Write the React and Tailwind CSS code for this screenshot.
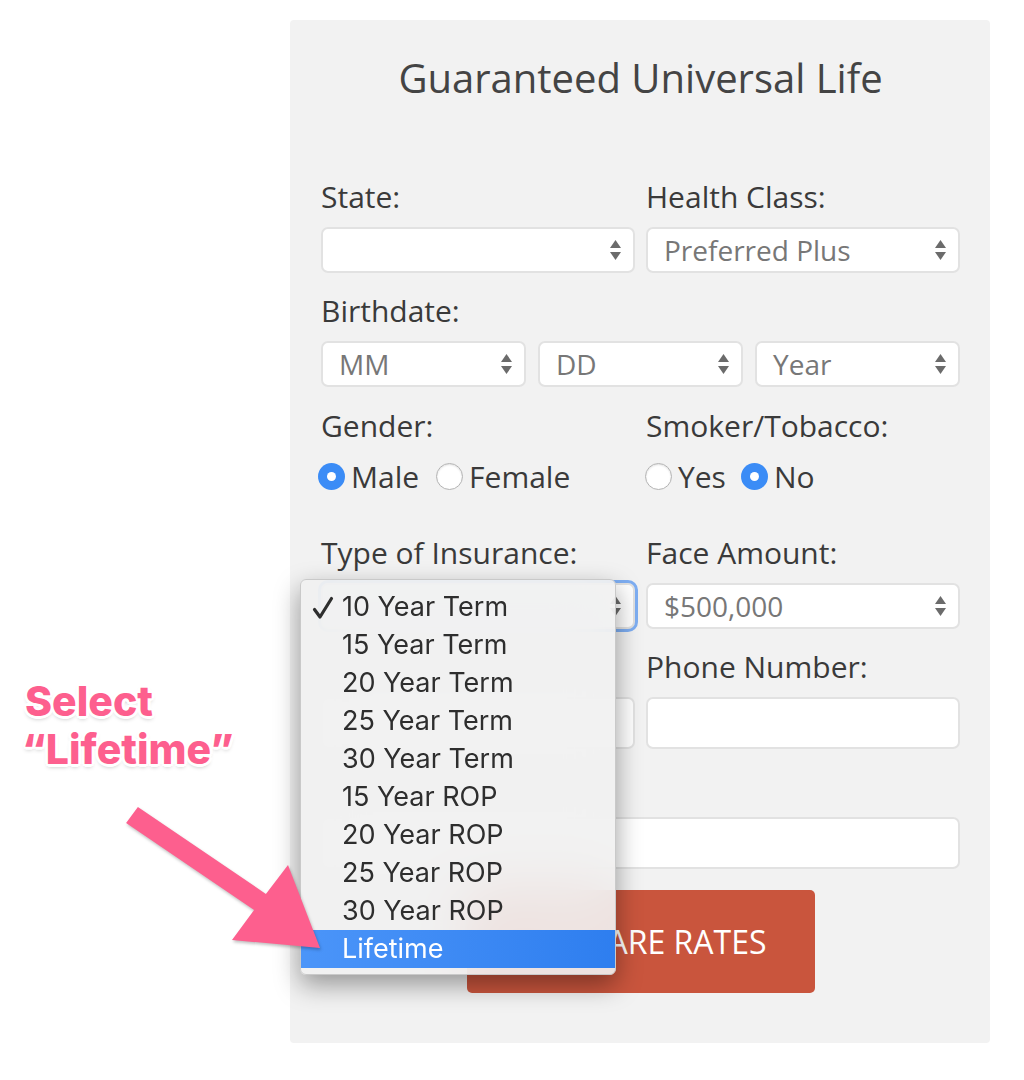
import React from 'react';

const termOptions = [
  '10 Year Term',
  '15 Year Term',
  '20 Year Term',
  '25 Year Term',
  '30 Year Term',
  '15 Year ROP',
  '20 Year ROP',
  '25 Year ROP',
  '30 Year ROP',
  'Lifetime',
];

function Arrows() {
  return (
    <svg width="11" height="22" viewBox="0 0 11 22" className="absolute right-[12px] top-1/2 -translate-y-1/2">
      <polygon points="0,9 5.5,1 11,9" fill="#6b6b6b" />
      <polygon points="0,13 11,13 5.5,21" fill="#6b6b6b" />
    </svg>
  );
}

function SelectBox({ value, focused, children }) {
  return (
    <div
      className={`relative h-[46px] rounded-[7px] border-2 border-[#e2e2e2] bg-white flex items-center pl-[16px] text-[28px] text-[#777] ${
        focused ? 'outline-[3px] outline-solid outline-[#7eaef2] outline-offset-0' : ''
      }`}
    >
      <span>{value}</span>
      <Arrows />
      {children}
    </div>
  );
}

function TextBox() {
  return <div className="h-[52px] rounded-[7px] border-2 border-[#e2e2e2] bg-white" />;
}

function Radio({ checked, label }) {
  return (
    <div className="flex items-center gap-[6px]">
      {checked ? (
        <span className="w-[27px] h-[27px] rounded-full bg-[#3b8cf6] flex items-center justify-center">
          <span className="w-[9px] h-[9px] rounded-full bg-white" />
        </span>
      ) : (
        <span className="w-[27px] h-[27px] rounded-full bg-white border border-[#b3b3b3] shadow-[inset_0_1px_2px_rgba(0,0,0,0.12)]" />
      )}
      <span>{label}</span>
    </div>
  );
}

function Label({ children }) {
  return <div className="h-[36px] text-[30px] leading-[36px] text-[#3a3a3a]">{children}</div>;
}

function Dropdown() {
  return (
    <div className="absolute left-[-23px] top-[-6px] w-[316px] h-[396px] z-20 rounded-[6px] border border-[#c9c9c9] bg-[#f1f1f1]/90 backdrop-blur-[28px] shadow-[0_10px_26px_rgba(0,0,0,0.38)] py-[8px] font-['Inter',sans-serif] text-[27px] text-[#2e2e2e]">
      {termOptions.map((opt, i) => {
        const active = opt === 'Lifetime';
        return (
          <div
            key={opt}
            className={`relative h-[38px] leading-[38px] pl-[41px] ${
              active ? 'bg-linear-to-r from-[#4b95f9] to-[#2e7eef] text-white' : ''
            }`}
          >
            {i === 0 && (
              <svg width="22" height="24" viewBox="0 0 22 24" className="absolute left-[11px] top-[8px]">
                <path d="M2.5 13.5 L8 21 L19.5 2.5" fill="none" stroke="#2e2e2e" strokeWidth="3.2" strokeLinecap="round" strokeLinejoin="round" />
              </svg>
            )}
            {opt}
          </div>
        );
      })}
    </div>
  );
}

export default function App() {
  return (
    <div className="relative w-[1024px] h-[1080px] bg-white font-['Open_Sans',sans-serif] overflow-hidden">
      <div className="pt-[20px] pl-[290px]">
        <div className="w-[700px] h-[1023px] rounded-[4px] bg-[#f2f2f2] pl-[31px] pr-[30px] pt-[32px]">
          <h1 className="text-center text-[40px] leading-[52px] text-[#444]">Guaranteed Universal Life</h1>

          {/* State / Health class */}
          <div className="mt-[75px] grid grid-cols-2 gap-x-[11px]">
            <div>
              <Label>State:</Label>
              <div className="mt-[12px]"><SelectBox value="" /></div>
            </div>
            <div>
              <Label>Health Class:</Label>
              <div className="mt-[12px]"><SelectBox value="Preferred Plus" /></div>
            </div>
          </div>

          {/* Birthdate */}
          <div className="mt-[20px]">
            <Label>Birthdate:</Label>
            <div className="mt-[12px] grid grid-cols-3 gap-x-[12px]">
              <SelectBox value="MM" />
              <SelectBox value="DD" />
              <SelectBox value="Year" />
            </div>
          </div>

          {/* Gender / Smoker */}
          <div className="mt-[21px] grid grid-cols-2 gap-x-[11px]">
            <div>
              <Label>Gender:</Label>
              <div className="mt-[14px] h-[36px] flex items-center gap-[17px] -ml-[3px] text-[30px] text-[#3a3a3a]">
                <Radio checked label="Male" />
                <Radio label="Female" />
              </div>
            </div>
            <div>
              <Label>Smoker/Tobacco:</Label>
              <div className="mt-[14px] h-[36px] flex items-center gap-[15px] -ml-[1px] text-[30px] text-[#3a3a3a]">
                <Radio label="Yes" />
                <Radio checked label="No" />
              </div>
            </div>
          </div>

          {/* Type / Face amount */}
          <div className="mt-[41px] grid grid-cols-2 gap-x-[11px]">
            <div>
              <Label>Type of Insurance:</Label>
              <div className="mt-[12px]">
                <SelectBox value="" focused>
                  <Dropdown />
                </SelectBox>
              </div>
            </div>
            <div>
              <Label>Face Amount:</Label>
              <div className="mt-[12px]"><SelectBox value="$500,000" /></div>
            </div>
          </div>

          {/* Name (under the menu) / Phone */}
          <div className="mt-[20px] grid grid-cols-2 gap-x-[11px]">
            <div>
              <Label />
              <div className="mt-[12px]"><TextBox /></div>
            </div>
            <div>
              <Label>Phone Number:</Label>
              <div className="mt-[12px]"><TextBox /></div>
            </div>
          </div>

          {/* Email (under the menu) */}
          <div className="mt-[20px]">
            <Label />
            <div className="mt-[12px]"><TextBox /></div>
          </div>

          <button className="mt-[21px] mx-auto flex items-center justify-center w-[348px] h-[103px] rounded-[5px] bg-[#c9553d] text-white text-[32px]">
            COMPARE RATES
          </button>
        </div>
      </div>

      {/* annotation */}
      <div className="absolute left-[22px] top-[677px] z-30 font-['Inter',sans-serif] font-extrabold text-[41px] leading-[48px] text-[#fd5f8e] [text-shadow:3px_0_0_#fff,-3px_0_0_#fff,0_3px_0_#fff,0_-3px_0_#fff,2px_2px_0_#fff,-2px_2px_0_#fff,2px_-2px_0_#fff,-2px_-2px_0_#fff,0_3px_4px_rgba(0,0,0,0.25)]">
        <div className="pl-[3px]">Select</div>
        <div>“Lifetime”</div>
      </div>

      <svg className="absolute left-0 top-0 z-30 pointer-events-none" width="1024" height="1080" viewBox="0 0 1024 1080">
        <polygon
          points="137.9,806.9 265.9,893.9 288,865 320,948 232,940 254.1,910.1 126.1,823.1"
          fill="#fd5f8e"
          style={{ filter: 'drop-shadow(1px 2px 1.5px rgba(0,0,0,0.25))' }}
        />
      </svg>
    </div>
  );
}
